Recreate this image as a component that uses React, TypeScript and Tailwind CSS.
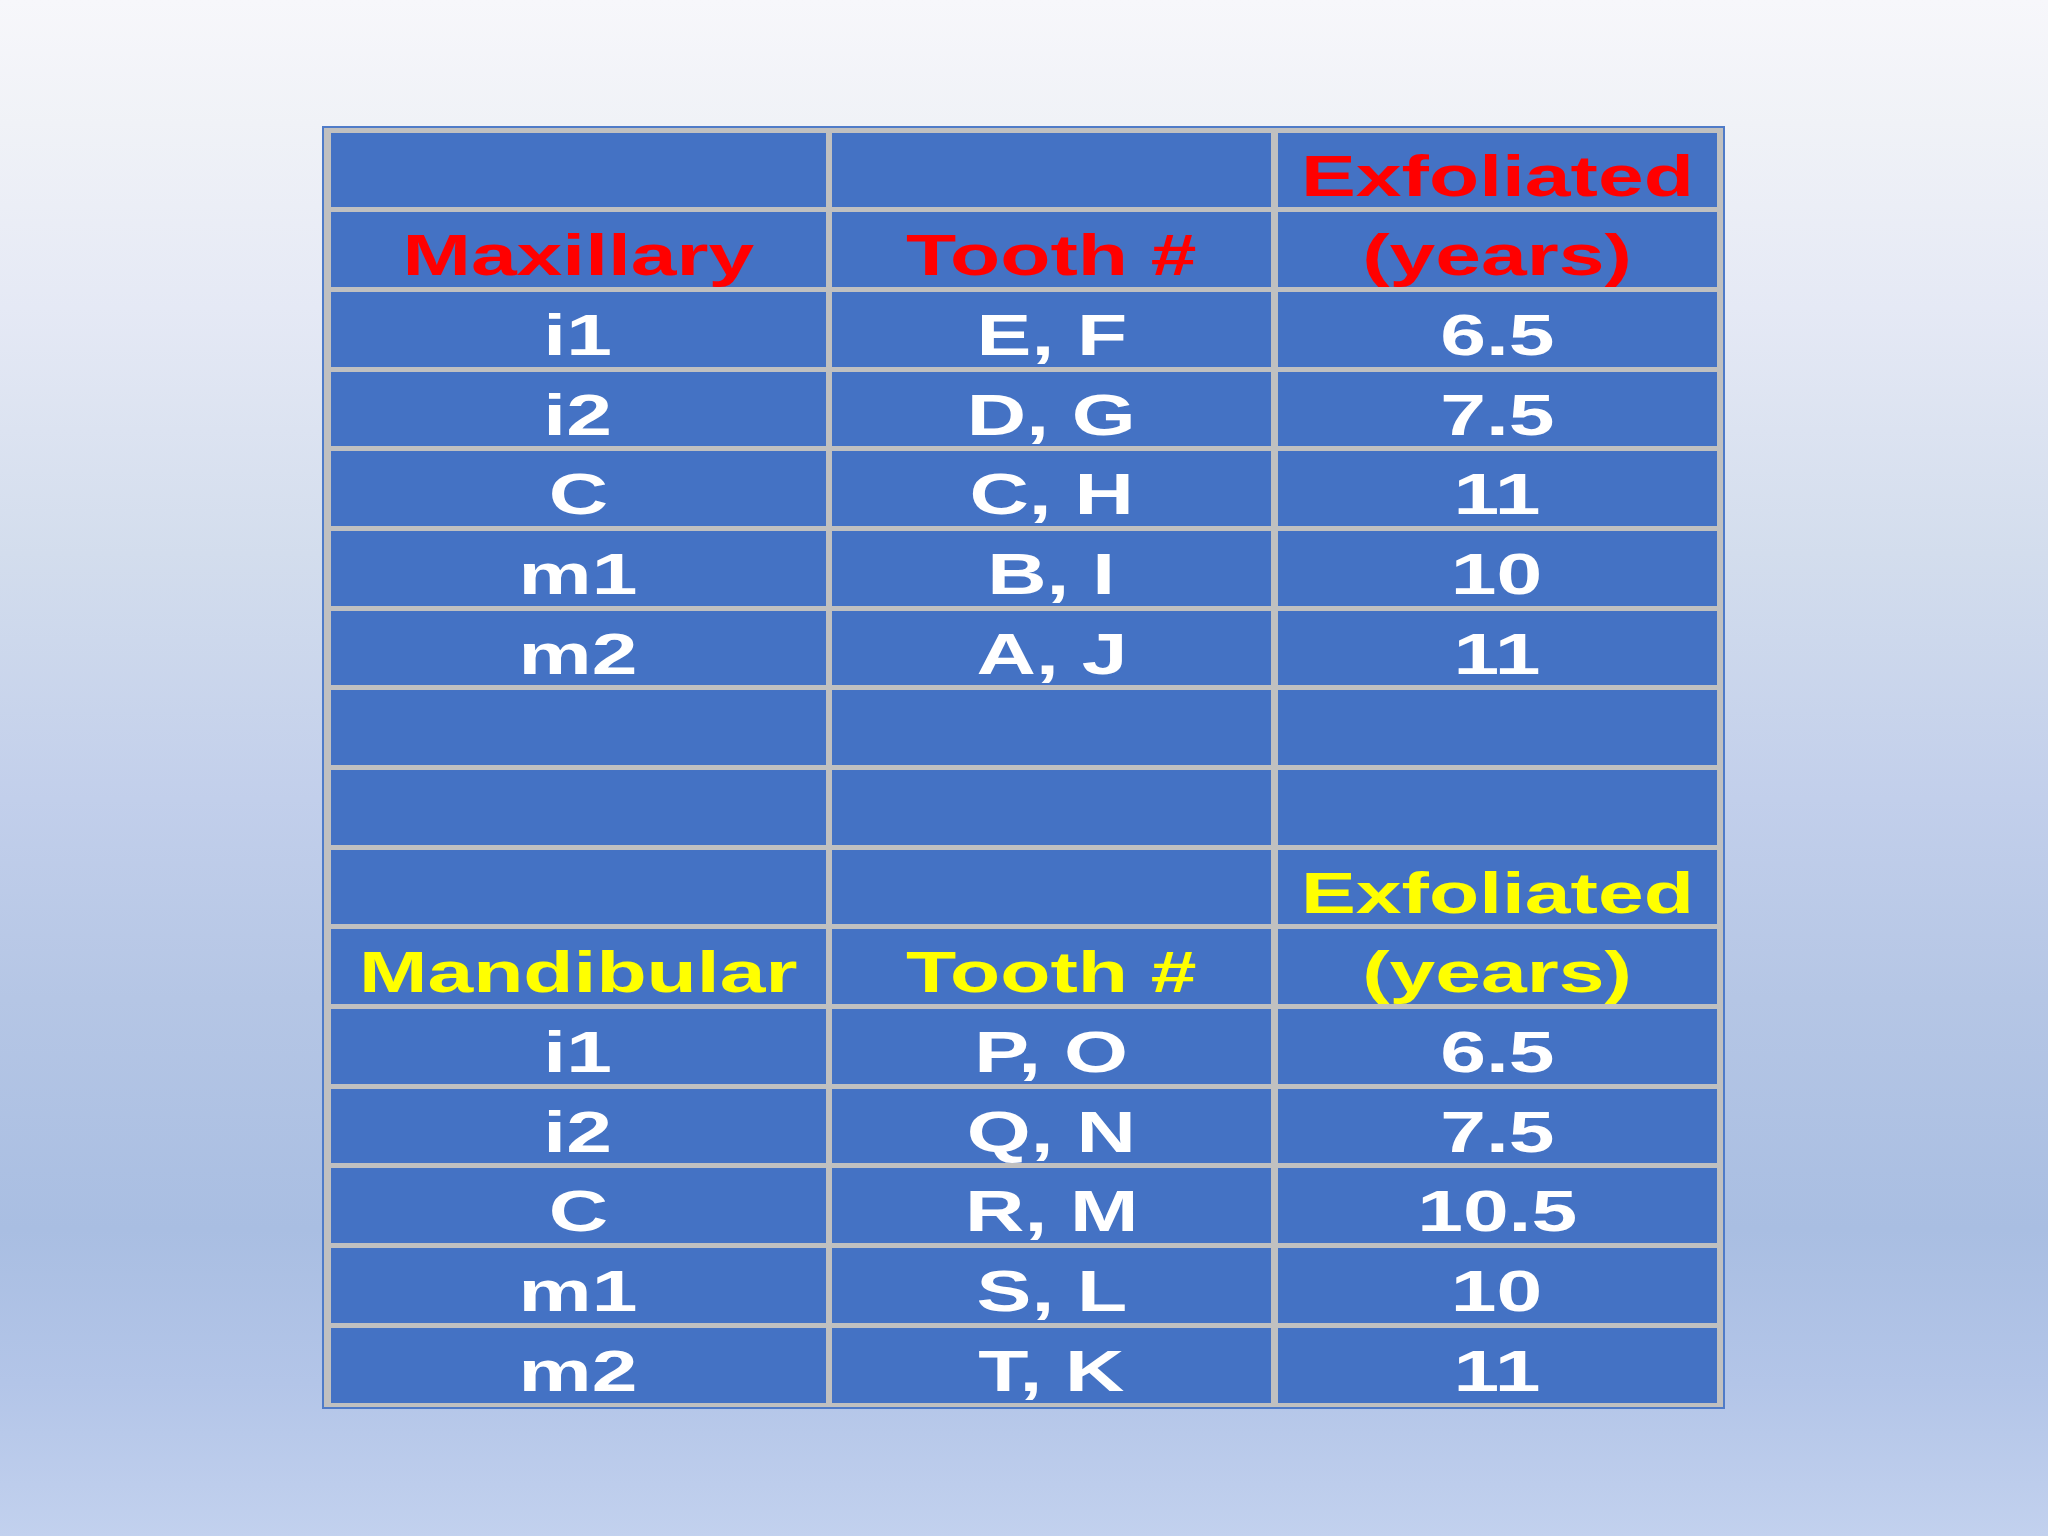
import React from 'react'

type Cell = { text: string; color?: 'red' | 'yellow' | 'white' }

const rows: Cell[][] = [
  [{ text: '' }, { text: '' }, { text: 'Exfoliated', color: 'red' }],
  [{ text: 'Maxillary', color: 'red' }, { text: 'Tooth #', color: 'red' }, { text: '(years)', color: 'red' }],
  [{ text: 'i1' }, { text: 'E, F' }, { text: '6.5' }],
  [{ text: 'i2' }, { text: 'D, G' }, { text: '7.5' }],
  [{ text: 'C' }, { text: 'C, H' }, { text: '11' }],
  [{ text: 'm1' }, { text: 'B, I' }, { text: '10' }],
  [{ text: 'm2' }, { text: 'A, J' }, { text: '11' }],
  [{ text: '' }, { text: '' }, { text: '' }],
  [{ text: '' }, { text: '' }, { text: '' }],
  [{ text: '' }, { text: '' }, { text: 'Exfoliated', color: 'yellow' }],
  [{ text: 'Mandibular', color: 'yellow' }, { text: 'Tooth #', color: 'yellow' }, { text: '(years)', color: 'yellow' }],
  [{ text: 'i1' }, { text: 'P, O' }, { text: '6.5' }],
  [{ text: 'i2' }, { text: 'Q, N' }, { text: '7.5' }],
  [{ text: 'C' }, { text: 'R, M' }, { text: '10.5' }],
  [{ text: 'm1' }, { text: 'S, L' }, { text: '10' }],
  [{ text: 'm2' }, { text: 'T, K' }, { text: '11' }],
]

const colorClass = {
  red: 'text-[#ff0000]',
  yellow: 'text-[#ffff00]',
  white: 'text-white',
}

const App = () => {
  return (
    <div className="w-[2048px] h-[1536px] overflow-hidden bg-[linear-gradient(180deg,#f7f7fb_0%,#f0f2f7_8%,#e5e9f5_20%,#d3dded_36%,#c2cfeb_52%,#b5c6e5_65%,#a9bee2_80%,#b3c5e8_90%,#c2d1ee_100%)] pl-[322px] pt-[126px]">
      <div className="w-[1403px] border-2 border-[#4f7bc8] bg-[#c0c0c0] px-[6.5px] py-[4.5px]">
        <div className="grid grid-cols-[495px_439px_439px] gap-x-[6.5px] gap-y-[5px]">
          {rows.map((row, r) =>
            row.map((cell, c) => (
              <div
                key={r + '-' + c}
                className="h-[74.7px] bg-[#4472c4] pt-[16px] text-center leading-none font-['Liberation_Sans',Arial,sans-serif] font-bold text-[56.7px] whitespace-nowrap"
              >
                {cell.text && (
                  <span className={'inline-block scale-x-[1.45] ' + colorClass[cell.color || 'white']}>
                    {cell.text}
                  </span>
                )}
              </div>
            ))
          )}
        </div>
      </div>
    </div>
  )
}

export default App
